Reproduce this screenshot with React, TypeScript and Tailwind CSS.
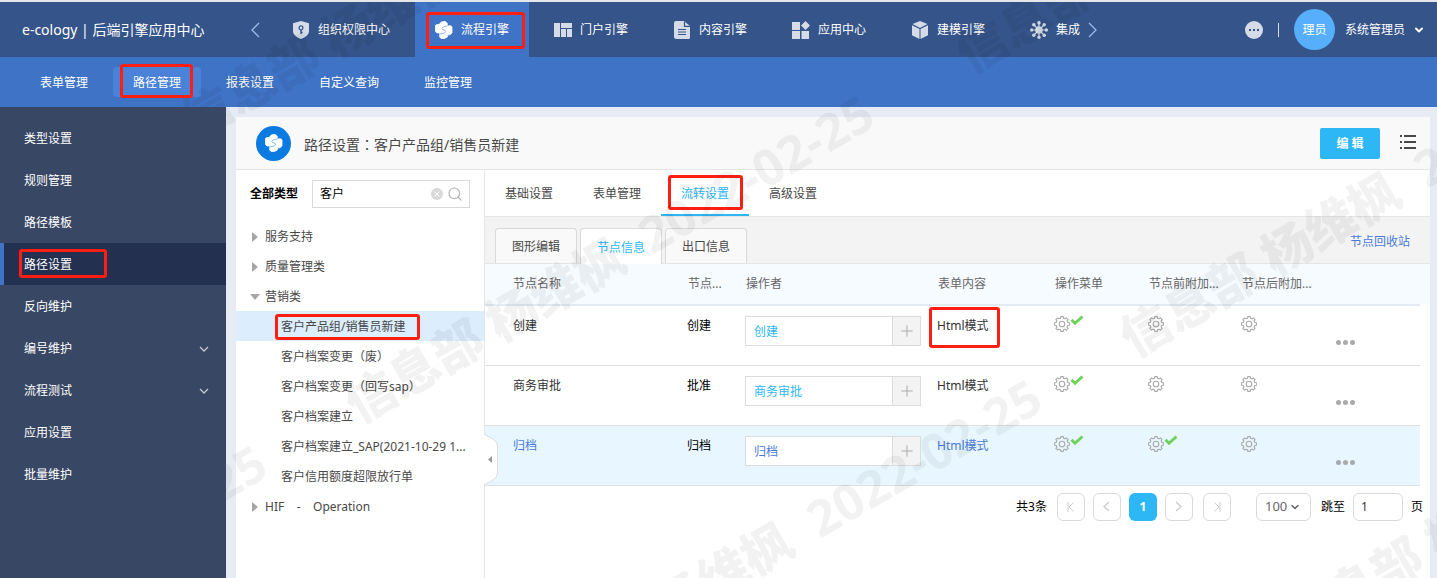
import React from "react";
import { ChevronDown, Plus, Search } from "lucide-react";

const IconBox = ({ children, size = 18 }: { children: React.ReactNode; size?: number }) => (
  <svg width={size} height={size} viewBox="0 0 18 18" fill="currentColor" className="shrink-0" aria-hidden="true">
    {children}
  </svg>
);

const ShieldIcon = () => (
  <IconBox>
    <path
      fillRule="evenodd"
      d="M9 0 17 2.2V10c0 3.6-3 6-8 8-5-2-8-4.400-8-8V2.200ZM9 4.300a2.600 2.600 0 0 0-.7 5.100V13h1.400v-1h1v-1.200h-1V9.400A2.600 2.600 0 0 0 9 4.300Zm0 1.300a1.300 1.300 0 1 1 0 2.600 1.300 1.300 0 0 1 0-2.600Z"
    />
  </IconBox>
);

const FlowIcon = ({ line }: { line: string }) => (
  <IconBox>
    <path
      d="M.5 4.500 1.500 3.600H4L6 1.200 8.500.4 10.500.6 12.300 2.400V5l3.400-.2 1.300 1V12l-2 1.800h-2L12 16.300l-3 1.300H6.200L4.700 16v-4H2L.5 10.500Z"
      stroke="currentColor"
      strokeWidth=".8"
      strokeLinejoin="round"
    />
    <path d="M12.500 5 8 6 6.800 7.200 7.600 8.500 10 9.200 10.500 10.800 9.500 12 4.700 13" fill="none" stroke={line} strokeWidth=".5" />
  </IconBox>
);

const PortalIcon = () => (
  <IconBox>
    <path d="M0 2h6v14H0zM7 2h11v5H7zM7 8h5v8H7zM13 8h5v8h-5z" />
  </IconBox>
);

const DocIcon = () => (
  <IconBox>
    <path d="M3 0h8l6 5v11.500q0 1.500-1.500 1.500h-12Q1 18 1 16V2Q1 0 3 0Z" />
    <path d="M11.500.5v4.800H17M5 8.500h8M5 11h8M5 13.500h8" fill="none" stroke="#355489" strokeWidth="1.200" />
  </IconBox>
);

const AppsIcon = () => (
  <IconBox>
    <path d="M0 1h8v8H0zM0 10h8v8H0zM9.500 10H17v8H9.500zM13.500 0 18 4.500 13.500 9 9 4.500Z" />
  </IconBox>
);

const CubeIcon = () => (
  <IconBox>
    <path d="M9 0 16.500 3 9 7 1.500 3ZM1 4.200 8.500 8v10L1 14.300ZM17 4.200 9.500 8v10l7.500-3.700Z" />
  </IconBox>
);

const HubIcon = () => (
  <IconBox>
    <path d="M9 2v14M2 9h14M4 4l10 10M14 4 4 14" stroke="currentColor" strokeWidth="1.200" />
    <circle cx="9" cy="9" r="3.800" />
    {[[9, 1.7], [9, 16.3], [1.7, 9], [16.3, 9], [3.8, 3.8], [14.2, 3.8], [3.8, 14.2], [14.2, 14.2]].map(([x, y]) => (
      <circle key={`${x}-${y}`} cx={x} cy={y} r="1.700" />
    ))}
  </IconBox>
);

const Arrow = ({ dir, w, h }: { dir: "left" | "right" | "down"; w: number; h: number }) => {
  const d =
    dir === "left"
      ? `M${w - 1} 1L1 ${h / 2}L${w - 1} ${h - 1}`
      : dir === "right"
        ? `M1 1L${w - 1} ${h / 2}L1 ${h - 1}`
        : `M1 1L${w / 2} ${h - 1}L${w - 1} 1`;
  return (
    <svg width={w} height={h} viewBox={`0 0 ${w} ${h}`} fill="none" stroke="currentColor" strokeWidth="1.300" aria-hidden="true">
      <path d={d} />
    </svg>
  );
};

const gearPath = (() => {
  const points: string[] = [];
  for (let i = 0; i < 8; i++) {
    const a = (i * Math.PI) / 4;
    [[-0.25, 6], [-0.17, 7.5], [0.17, 7.5], [0.25, 6]].forEach(([d, r]) => {
      points.push(`${(8 + r * Math.sin(a + d)).toFixed(2)} ${(8 - r * Math.cos(a + d)).toFixed(2)}`);
    });
  }
  return `M${points.join("L")}Z`;
})();

const Gear = ({ done, label }: { done?: boolean; label: string }) => (
  <button type="button" aria-label={label} className="flex items-start">
    <svg width="16" height="16" viewBox="0 0 16 16" fill="none" stroke="#a9a9a9" strokeWidth="1.100" strokeLinejoin="round" className="mt-1">
      <path d={gearPath} />
      <circle cx="8" cy="8" r="2.800" />
    </svg>
    {done && (
      <svg width="14" height="11" viewBox="0 0 14 11" fill="none" stroke="#6fd35b" strokeWidth="3" className="mt-[3px]">
        <path d="M1.500 4.800 5 8.300 12.500 1.500" />
      </svg>
    )}
  </button>
);

const Mark = ({ className }: { className: string }) => (
  <span aria-hidden="true" className={`pointer-events-none absolute rounded-[3px] border-3 border-[#ff1f12] ${className}`} />
);

const topItems = [
  { label: "组织权限中心", icon: <ShieldIcon /> },
  { label: "流程引擎", icon: <FlowIcon line="#3f73c6" />, active: true },
  { label: "门户引擎", icon: <PortalIcon /> },
  { label: "内容引擎", icon: <DocIcon /> },
  { label: "应用中心", icon: <AppsIcon /> },
  { label: "建模引擎", icon: <CubeIcon /> },
  { label: "集成", icon: <HubIcon /> },
];

const subItems = ["表单管理", "路径管理", "报表设置", "自定义查询", "监控管理"];

const sideItems = [
  { label: "类型设置" },
  { label: "规则管理" },
  { label: "路径模板" },
  { label: "路径设置", active: true },
  { label: "反向维护" },
  { label: "编号维护", more: true },
  { label: "流程测试", more: true },
  { label: "应用设置" },
  { label: "批量维护" },
];

const treeItems = [
  { label: "服务支持", kind: "closed" },
  { label: "质量管理类", kind: "closed" },
  { label: "营销类", kind: "open" },
  { label: "客户产品组/销售员新建", kind: "leaf", active: true },
  { label: "客户档案变更（废）", kind: "leaf" },
  { label: "客户档案变更（回写sap）", kind: "leaf" },
  { label: "客户档案建立", kind: "leaf" },
  { label: "客户档案建立_SAP(2021-10-29 1...", kind: "leaf" },
  { label: "客户信用额度超限放行单", kind: "leaf" },
  { label: "HIF\u00a0\u00a0\u00a0\u00a0-\u00a0\u00a0\u00a0\u00a0Operation", kind: "closed" },
];

const tabs = ["基础设置", "表单管理", "流转设置", "高级设置"];
const subTabs = ["图形编辑", "节点信息", "出口信息"];
const columns = ["节点名称", "节点...", "操作者", "表单内容", "操作菜单", "节点前附加...", "节点后附加...", ""];

const rows = [
  { name: "创建", type: "创建", operator: "创建", marked: true },
  { name: "商务审批", type: "批准", operator: "商务审批" },
  { name: "归档", type: "归档", operator: "归档", active: true, pre: true },
];

const watermarks = [
  "left-[145px] -top-[61px]",
  "left-[920px] -top-[127px]",
  "left-[309px] top-[223px]",
  "left-[1084px] top-[157px]",
  "-left-[298px] top-[573px]",
  "left-[477px] top-[507px]",
  "left-[1248px] top-[441px]",
];

function TopBar() {
  return (
    <header className="flex h-[55px] items-center bg-[#355489] text-white">
      <h1 className="w-[226px] shrink-0 pl-[22px] text-sm whitespace-nowrap">e-cology | 后端引擎应用中心</h1>
      <button type="button" aria-label="向左" className="flex w-[46px] shrink-0 justify-center pl-3 text-[#9dbbe8]">
        <Arrow dir="left" w={9} h={16} />
      </button>
      <nav className="flex h-full gap-[5px]">
        {topItems.map((item) => (
          <a
            key={item.label}
            href="#"
            className={`relative flex h-full items-center gap-2 pl-5 whitespace-nowrap ${item.active ? "bg-[#3f73c6]" : ""} ${item.label === "集成" ? "" : "pr-5"}`}
          >
            <span className={item.active ? "text-white" : "text-[#d5dce8]"}>{item.icon}</span>
            {item.label}
            {item.active && <Mark className="top-[10px] right-1 left-[11px] h-[37px]" />}
          </a>
        ))}
      </nav>
      <button type="button" aria-label="向右" className="ml-2 text-[#9dbbe8]">
        <Arrow dir="right" w={9} h={16} />
      </button>
      <div className="ml-auto flex items-center pr-3">
        <button type="button" aria-label="更多" className="text-[#d5dce8]">
          <IconBox>
            <circle cx="9" cy="9" r="9" />
            <path d="M4 8h2v2H4zM8 8h2v2H8zM12 8h2v2h-2z" fill="#355489" />
          </IconBox>
        </button>
        <span className="mr-[15px] ml-[15px] h-[14px] w-px bg-white/80" />
        <span className="flex size-[41px] items-center justify-center rounded-full bg-[#56aefc]">理员</span>
        <button type="button" className="ml-[10px] flex items-center gap-2">
          系统管理员
          <ChevronDown size={12} strokeWidth={4} />
        </button>
      </div>
    </header>
  );
}

function SubNav() {
  return (
    <nav className="flex h-[50px] items-center gap-[5px] bg-[#3f73c6] pl-5 text-white">
      {subItems.map((label, i) => (
        <a key={label} href="#" className={`relative flex h-[30px] items-center rounded px-5 pt-0.5 ${i === 1 ? "bg-[#4a82d8]" : ""}`}>
          {label}
          {i === 1 && <Mark className="-top-[3px] right-2 left-[7px] h-[34px]" />}
        </a>
      ))}
    </nav>
  );
}

function SideBar() {
  return (
    <aside className="relative z-10 w-[226px] shrink-0 bg-[#384764] pt-[10px] text-white">
      {sideItems.map((item) => (
        <a
          key={item.label}
          href="#"
          className={`relative flex h-[42px] items-center justify-between border-l-4 pt-0.5 pr-[17px] pl-5 ${item.active ? "border-[#3f73c6] bg-[#233050]" : "border-transparent"}`}
        >
          {item.label}
          {item.more && (
            <span className="text-[#c3c8d1]">
              <Arrow dir="down" w={10} h={6} />
            </span>
          )}
          {item.active && <Mark className="top-[6px] left-[15px] h-[29px] w-[88px]" />}
        </a>
      ))}
    </aside>
  );
}

function TypeTree() {
  return (
    <section className="w-[249px] shrink-0 border-r border-[#e5e5e5] text-[#484848]">
      <div className="flex items-center gap-[14px] px-[14px] pt-[10px]">
        <label htmlFor="type-search" className="font-bold whitespace-nowrap text-black">全部类型</label>
        <div className="flex h-7 min-w-0 flex-1 items-center border border-[#d9d9d9] px-[6px]">
          <input id="type-search" defaultValue="客户" className="min-w-0 flex-1 bg-transparent pl-px text-black outline-none" />
          <button type="button" aria-label="清除">
            <svg width="12" height="12" viewBox="0 0 12 12">
              <circle cx="6" cy="6" r="6" fill="#d9d9d9" />
              <path d="M3.500 3.500l5 5M8.500 3.500l-5 5" stroke="#fff" />
            </svg>
          </button>
          <button type="button" aria-label="搜索" className="ml-1 text-[#b5b5b5]">
            <Search size={16} strokeWidth={1.8} />
          </button>
        </div>
      </div>
      <ul className="pt-[13px]">
        {treeItems.map((item) => (
          <li key={item.label} className={`relative flex h-[30px] items-center pt-0.5 ${item.active ? "bg-[#dcedfe]" : ""}`}>
            {item.kind === "leaf" ? (
              <span className="w-[45px]" />
            ) : (
              <span className="flex w-[29px] justify-center pl-[8px]">
                <svg width="10" height="10" viewBox="0 0 10 10" fill="#a6a6a6">
                  <path d={item.kind === "open" ? "M0 2h10L5 8Z" : "M2 0v10l6-5Z"} />
                </svg>
              </span>
            )}
            <a href="#" className="whitespace-nowrap">{item.label}</a>
            {item.active && <Mark className="top-[3px] left-[39px] h-[26px] w-[145px]" />}
          </li>
        ))}
      </ul>
    </section>
  );
}

function NodeTable() {
  return (
    <div className="bg-linear-to-b from-[#f6fbff] from-[40px] to-white to-[40px] pr-[10px]">
      <table className="w-full table-fixed border-collapse">
        <colgroup>
          <col className="w-[190px]" />
          <col className="w-[58px]" />
          <col className="w-[192px]" />
          <col className="w-[117px]" />
          <col className="w-[94px]" />
          <col className="w-[93px]" />
          <col className="w-[94px]" />
          <col />
        </colgroup>
        <thead>
          <tr className="h-[41px] border-b-2 border-[#e2eaf2] text-left text-[#666]">
            {columns.map((c, i) => (
              <th key={i} scope="col" className={`font-normal whitespace-nowrap ${i === 0 ? "pl-7" : "pl-[13px]"}`}>{c}</th>
            ))}
          </tr>
        </thead>
        <tbody>
          {rows.map((row) => (
            <tr
              key={row.name}
              className={`h-[60px] border-b border-[#dfdfdf] align-top text-[#333] ${row.active ? "bg-[#e8f7ff]" : ""}`}
            >
              <td className={`pt-3 pl-7 ${row.active ? "text-[#4a7ad6]" : ""}`}>{row.name}</td>
              <td className="pt-3 pl-3 text-black">{row.type}</td>
              <td className="pt-[10px] pl-3">
                <div className="mr-1 flex h-[30px] border border-[#dcdcdc] bg-white">
                  <input
                    aria-label={`${row.name}操作者`}
                    defaultValue={row.operator}
                    className={`min-w-0 flex-1 bg-transparent px-2 pt-0.5 outline-none ${row.active ? "text-[#4a7ad6]" : "text-[#2db7f5]"}`}
                  />
                  <button type="button" aria-label="添加" className="flex w-7 items-center justify-center border-l border-[#dcdcdc] bg-[#f3f3f3] text-[#aaa]">
                    <Plus size={18} strokeWidth={1.3} />
                  </button>
                </div>
              </td>
              <td className={`relative pt-3 pl-3 ${row.active ? "text-[#4a7ad6]" : ""}`}>
                Html模式
                {row.marked && <Mark className="top-px left-1 h-[41px] w-[71px]" />}
              </td>
              <td className="pt-[6px] pl-3"><Gear done label="操作菜单" /></td>
              <td className="pt-[6px] pl-3"><Gear done={row.pre} label="节点前附加操作" /></td>
              <td className="pt-[6px] pl-3"><Gear label="节点后附加操作" /></td>
              <td className="pt-[34px] pl-[13px]">
                <button type="button" aria-label="更多操作" className="flex gap-[2px]">
                  <span className="size-[5px] rounded-full bg-[#aaa]" />
                  <span className="size-[5px] rounded-full bg-[#aaa]" />
                  <span className="size-[5px] rounded-full bg-[#aaa]" />
                </button>
              </td>
            </tr>
          ))}
        </tbody>
      </table>
    </div>
  );
}

const pageButton = "flex size-7 items-center justify-center rounded-md border border-[#d9d9d9] text-[#ccc]";

function Pagination() {
  return (
    <div className="flex items-center justify-end gap-2 pt-[7px] pr-[7px] text-black">
      <span className="mr-[2px]">共3条</span>
      <button type="button" aria-label="首页" className={pageButton}>
        <svg width="8" height="10" viewBox="0 0 8 10" fill="none" stroke="currentColor"><path d="M1 0v10M6.500.5 2 5l4.500 4.500" /></svg>
      </button>
      <button type="button" aria-label="上一页" className={pageButton}><Arrow dir="left" w={7} h={11} /></button>
      <button type="button" className="size-7 rounded-md bg-[#2db7f5] font-bold text-white">1</button>
      <button type="button" aria-label="下一页" className={pageButton}><Arrow dir="right" w={7} h={11} /></button>
      <button type="button" aria-label="末页" className={`ml-[2px] ${pageButton}`}>
        <svg width="8" height="10" viewBox="0 0 8 10" fill="none" stroke="currentColor"><path d="M7 0v10M1.500.5 6 5 1.500 9.500" /></svg>
      </button>
      <div className="relative ml-[17px] flex items-center">
        <select aria-label="每页条数" className="h-7 w-[55px] appearance-none rounded-md border border-[#d9d9d9] bg-white pl-2 text-[13px] text-[#666] outline-none">
          <option>100</option>
        </select>
        <ChevronDown size={12} strokeWidth={3} className="pointer-events-none absolute right-[10px] text-[#666]" />
      </div>
      <label htmlFor="page-jump" className="ml-[2px]">跳至</label>
      <input id="page-jump" defaultValue="1" className="h-7 w-[50px] rounded-md border border-[#d9d9d9] bg-white px-[7px] text-[#333] outline-none" />
      <span>页</span>
    </div>
  );
}

export default function App() {
  return (
    <div className="relative flex min-h-screen flex-col overflow-hidden border-t-2 border-[#e4e6ea] bg-[#e7ebf4] font-['Noto_Sans','Noto_Sans_CJK_SC',sans-serif] text-xs">
      <TopBar />
      <SubNav />
      <div className="flex flex-1">
        <SideBar />
        <main className="mt-[10px] mr-[7px] ml-[10px] flex min-w-0 flex-1 flex-col bg-white">
          <div className="flex h-[53px] shrink-0 items-center border-b border-[#e5e5e5] bg-[#f9f9f9] pr-[13px] pl-5">
            <span className="flex size-[35px] items-center justify-center rounded-full bg-[#0b7be2] text-white">
              <FlowIcon line="#0b7be2" />
            </span>
            <h2 className="ml-[13px] pt-0.5 text-sm text-[#484848]">
              路径设置<span className="font-['Noto_Sans_CJK_TC',sans-serif]" lang="zh-TW">：</span>客户产品组/销售员新建
            </h2>
            <button type="button" className="ml-auto h-[31px] w-[60px] rounded-xs bg-[#2db7f5] pt-0.5 font-bold text-white">编 辑</button>
            <button type="button" aria-label="菜单" className="mr-px ml-5 text-[#484848]">
              <svg width="16" height="16" viewBox="0 0 16 16" fill="currentColor">
                <path d="M0 0h2v2H0zM4 0h12v2H4zM0 6h2v2H0zM4 6h12v2H4zM0 12h2v2H0zM4 12h12v2H4z" />
              </svg>
            </button>
          </div>
          <div className="flex flex-1">
            <TypeTree />
            <section className="relative min-w-0 flex-1">
              <div className="flex h-[47px] border-b border-[#e5e5e5] text-[#484848]">
                {tabs.map((label, i) => (
                  <button
                    key={label}
                    type="button"
                    className={`relative h-[46px] border-b-2 px-5 pt-[3px] ${i === 2 ? "border-[#2db7f5] text-[#2db7f5]" : "border-transparent"}`}
                  >
                    {label}
                    {i === 2 && <Mark className="top-[5px] right-[6px] left-[7px] h-[35px]" />}
                  </button>
                ))}
              </div>
              <div className="flex h-[47px] items-end gap-[3px] border-b border-[#e5e5e5] bg-[#f3f3f3] px-[10px] text-[#484848]">
                {subTabs.map((label, i) => (
                  <button
                    key={label}
                    type="button"
                    className={`w-[82px] rounded-t-sm border border-b-0 border-[#d9d9d9] pt-0.5 ${i === 1 ? "-mb-px h-9 bg-white text-[#2db7f5]" : "h-[35px] bg-[#f9f9f9]"}`}
                  >
                    {label}
                  </button>
                ))}
                <a href="#" className="mr-[10px] mb-[13px] ml-auto text-[#4a7ad6]">节点回收站</a>
              </div>
              <NodeTable />
              <Pagination />
              <button type="button" aria-label="收起" className="absolute top-[263px] -left-px">
                <svg width="15" height="53" viewBox="0 0 15 53">
                  <path d="M0 1 9 6q4.500 3 4.500 7v27q0 4-4.500 7L0 52" fill="#fff" stroke="#dcdcdc" />
                  <path d="M8 23v7l-4-3.500Z" fill="#999" />
                </svg>
              </button>
            </section>
          </div>
        </main>
      </div>
      <div aria-hidden="true" className="pointer-events-none absolute inset-0 overflow-hidden">
        {watermarks.map((place) => (
          <span key={place} className={`absolute -rotate-30 text-[50px] font-bold whitespace-pre text-black/5 ${place}`}>
            <span className="font-black">信息部 杨维枫</span>{"  "}2022-02-25
          </span>
        ))}
      </div>
    </div>
  );
}
